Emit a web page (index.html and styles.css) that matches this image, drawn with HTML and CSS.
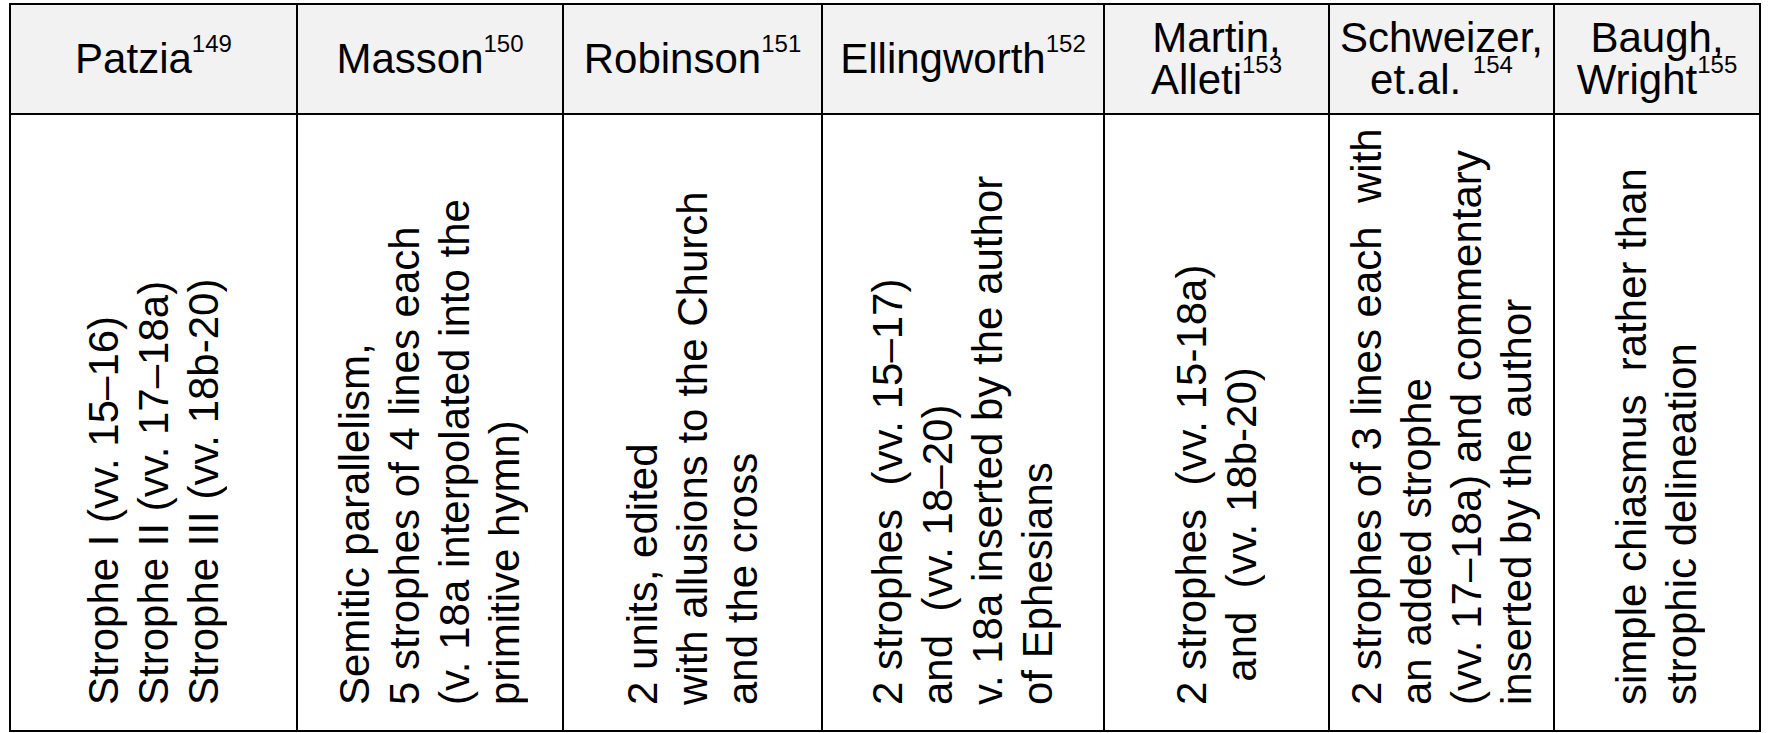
FILE: index.html
```html
<!DOCTYPE html>
<html lang="en">
<head>
<meta charset="utf-8">
<title>Hymn structure comparison</title>
<link rel="stylesheet" href="styles.css">
</head>
<body>
<table class="cmp">
  <colgroup>
    <col class="c1"><col class="c2"><col class="c3"><col class="c4"><col class="c5"><col class="c6"><col class="c7">
  </colgroup>
  <thead>
    <tr>
      <th>Patzia<sup>149</sup></th>
      <th>Masson<sup>150</sup></th>
      <th>Robinson<sup>151</sup></th>
      <th>Ellingworth<sup>152</sup></th>
      <th>Martin,<br>Alleti<sup>153</sup></th>
      <th>Schweizer,<br>et.al. <sup>154</sup></th>
      <th>Baugh,<br>Wright<sup>155</sup></th>
    </tr>
  </thead>
  <tbody>
    <tr>
      <td><div class="cell"><p class="vt">Strophe I (vv. 15–16)<br>Strophe II (vv. 17–18a)<br>Strophe III (vv. 18b-20)</p></div></td>
      <td><div class="cell"><p class="vt">Semitic parallelism,<br>5 strophes of 4 lines each<br>(v. 18a interpolated into the<br>primitive hymn)</p></div></td>
      <td><div class="cell"><p class="vt">2 units, edited<br>with allusions to the Church<br>and the cross</p></div></td>
      <td><div class="cell"><p class="vt">2 strophes&nbsp; (vv. 15–17)<br>and&nbsp; (vv. 18–20)<br>v. 18a inserted by the author<br>of Ephesians</p></div></td>
      <td><div class="cell"><p class="vt">2 strophes&nbsp; (vv. 15-18a)<br>&nbsp; and&nbsp; (vv. 18b-20)</p></div></td>
      <td><div class="cell"><p class="vt">2 strophes of 3 lines each&nbsp; with<br>an added strophe<br>(vv. 17–18a) and commentary<br>inserted by the author</p></div></td>
      <td><div class="cell"><p class="vt">simple chiasmus&nbsp; rather than<br>strophic delineation</p></div></td>
    </tr>
  </tbody>
</table>
</body>
</html>
```

FILE: styles.css
```css
html, body {
  margin: 0;
  padding: 0;
  background: #ffffff;
}

body {
  font-family: "Liberation Sans", Arial, sans-serif;
  color: #000000;
}

.cmp {
  border-collapse: collapse;
  table-layout: fixed;
  width: 1752px;
  margin: 3px 0 0 9px;
}

.c1 { width: 287px; }
.c2 { width: 266px; }
.c3 { width: 259px; }
.c4 { width: 282px; }
.c5 { width: 225px; }
.c6 { width: 225px; }
.c7 { width: 206px; }

.cmp th,
.cmp td {
  border: 2px solid #000000;
  padding: 0;
}

.cmp th {
  background: #f2f2f2;
  height: 108px;
  font-weight: normal;
  font-size: 42px;
  line-height: 42px;
  text-align: center;
  vertical-align: middle;
}

.cmp sup {
  font-size: 24px;
  line-height: 0;
  vertical-align: 21px;
}

.cmp td {
  background: #ffffff;
  vertical-align: bottom;
}

.cell {
  display: flex;
  justify-content: center;
  height: 615px;
  box-sizing: border-box;
  padding: 16px 0 25px;
}

.vt {
  margin: 0;
  writing-mode: vertical-rl;
  transform: rotate(180deg);
  font-size: 42px;
  line-height: 50px;
  white-space: nowrap;
  text-align: start;
}
```
